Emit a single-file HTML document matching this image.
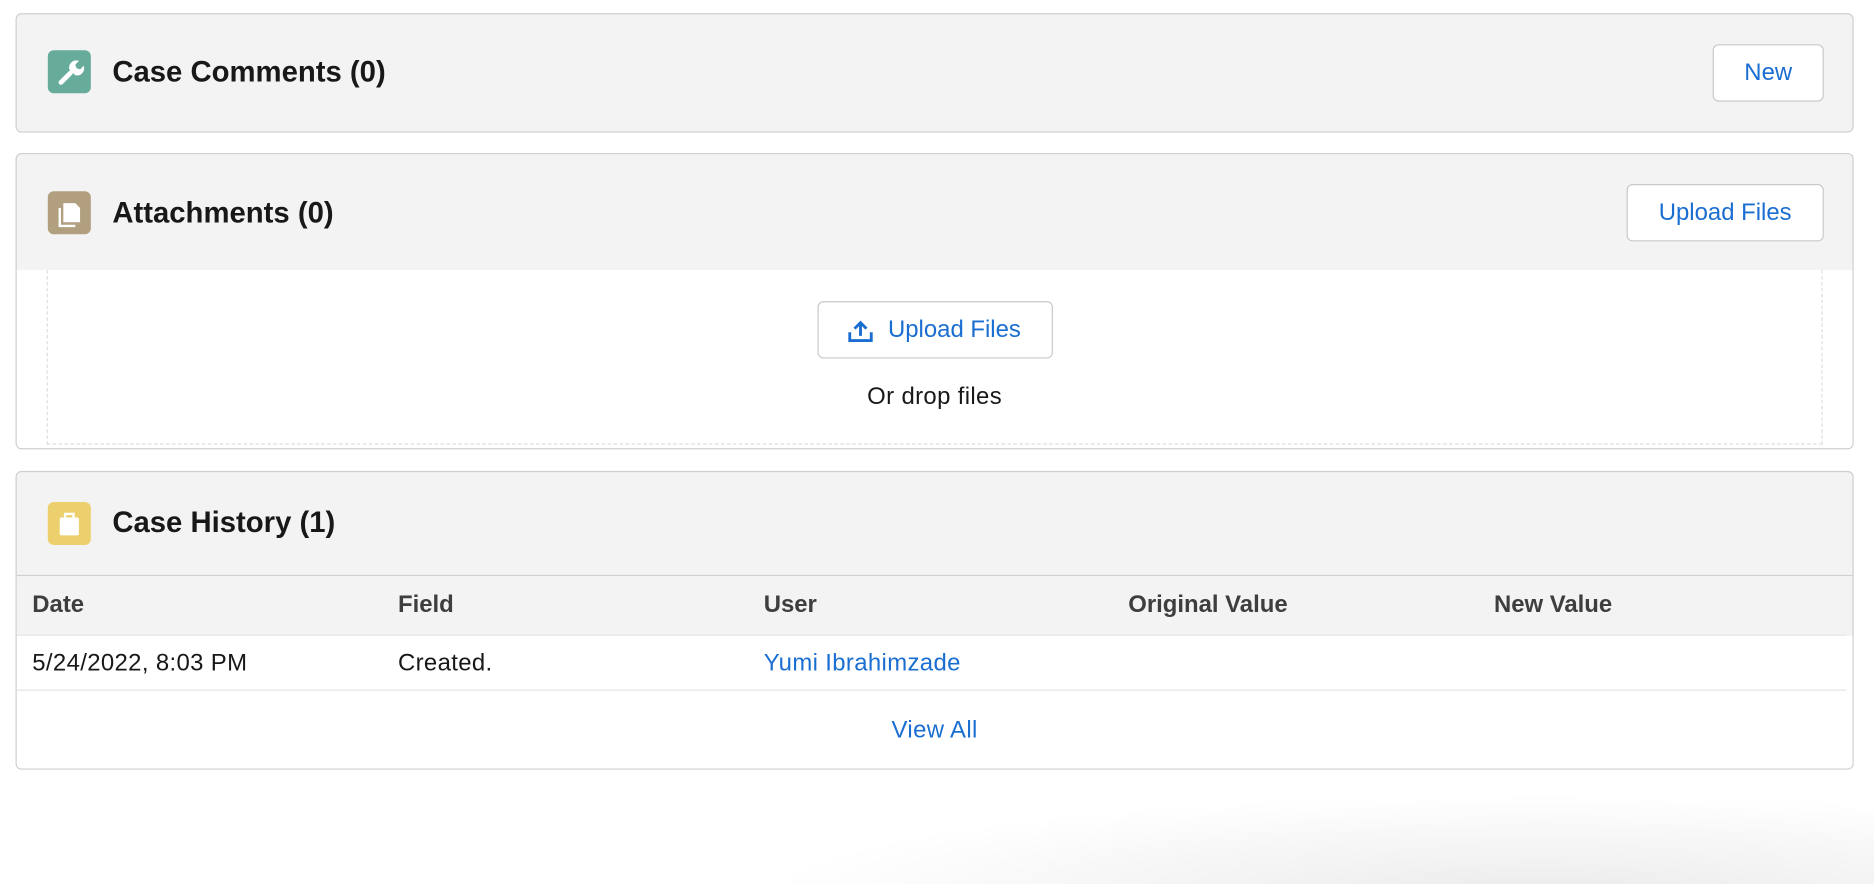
<!DOCTYPE html>
<html><head><meta charset="utf-8"><style>
html,body{margin:0;padding:0;width:1874px;height:826px;overflow:hidden;background:#fff;font-family:"Liberation Sans",Arial,sans-serif;}
#w{position:absolute;left:0;top:0;width:1568px;height:691px;transform:scale(1.19515);transform-origin:0 0;}
.card{position:absolute;left:13px;width:1536px;border:1px solid #cfcfcf;border-radius:5px;background:#f3f3f3;overflow:hidden;}
.ic{position:absolute;left:26px;width:36px;height:36px;border-radius:5px;}
.t{position:absolute;left:80px;font-size:24.5px;font-weight:bold;color:#181818;line-height:1;}
.btn{position:absolute;background:#fff;border:1px solid #c9c9c9;border-radius:5px;color:#1b6ed1;font-size:20px;text-align:center;box-sizing:border-box;}
.th{position:absolute;font-size:20px;font-weight:bold;color:#3e3e3e;}
.td{position:absolute;font-size:20px;color:#181818;letter-spacing:0.3px;}
</style></head><body><div id="w">
<div style="position:absolute;left:450px;top:640px;width:1200px;height:100px;background:radial-gradient(ellipse at 70% 110%,rgba(0,0,0,0.08),rgba(0,0,0,0) 55%);"></div>

<div class="card" style="top:11px;height:98px;">
 <div class="ic" style="top:30px;background:#67ab9b;">
  <svg width="36" height="36" viewBox="0 0 36 36"><path d="M11 27 L19 19" stroke="#fff" stroke-width="4" stroke-linecap="round"/><path d="M18 16 a6 6 0 0 1 8 -7 l-3 3 l1 3 l3 1 l3 -3 a6 6 0 0 1 -7 8 z" fill="#fff"/></svg>
 </div>
 <div class="t" style="top:37px;">Case Comments (0)</div>
 <div class="btn" style="left:1419px;top:25px;width:93px;height:48px;line-height:46px;">New</div>
</div>

<div class="card" style="top:128px;height:246px;">
 <div class="ic" style="top:31px;background:#b19f7f;">
  <svg width="36" height="36" viewBox="0 0 36 36"><path d="M13 10 h10 l4 4 v12 h-14z" fill="#fff"/><path d="M9 14 h2 v14 h12 v2 h-14z" fill="#fff"/></svg>
 </div>
 <div class="t" style="top:38px;">Attachments (0)</div>
 <div class="btn" style="left:1347px;top:25px;width:165px;height:48px;line-height:46px;">Upload Files</div>
 <div style="position:absolute;left:0;top:97px;width:1536px;height:149px;background:#fff;"></div>
 <div style="position:absolute;left:25px;top:97px;width:1486px;height:146px;border:1px dashed #dedede;border-top:none;background:#fff;box-sizing:border-box;"></div>
 <div class="btn" style="left:670px;top:123px;width:197px;height:48px;line-height:46px;">
  <svg style="position:absolute;left:24px;top:14px" width="22" height="20" viewBox="0 0 22 20"><path d="M2 11 v7 h18 v-7" fill="none" stroke="#1b6ed1" stroke-width="2.4"/><path d="M11 14 V3 M6 8 L11 3 L16 8" fill="none" stroke="#1b6ed1" stroke-width="2.4"/></svg>
  <span style="position:absolute;left:58px;top:0;">Upload Files</span>
 </div>
 <div class="td" style="left:0;width:1536px;text-align:center;top:192px;">Or drop files</div>
</div>

<div class="card" style="top:394px;height:248px;">
 <div class="ic" style="top:25px;background:#edd06e;">
  <svg width="36" height="36" viewBox="0 0 36 36"><rect x="10" y="13" width="16" height="15" rx="1.5" fill="#fff"/><path d="M14.5 13 v-3 h7 v3" fill="none" stroke="#fff" stroke-width="2"/></svg>
 </div>
 <div class="t" style="top:31px;">Case History (1)</div>
 <div style="position:absolute;left:0;top:86px;width:1536px;height:1px;background:#cfcfcf;"></div>
 <div style="position:absolute;left:0;top:87px;width:1531px;height:49px;background:#f3f3f3;border-bottom:1px solid #e3e3e3;"></div>
 <div class="th" style="left:13px;top:100px;">Date</div>
 <div class="th" style="left:319px;top:100px;">Field</div>
 <div class="th" style="left:625px;top:100px;">User</div>
 <div class="th" style="left:930px;top:100px;">Original Value</div>
 <div class="th" style="left:1236px;top:100px;">New Value</div>
 <div style="position:absolute;left:0;top:137px;width:1536px;height:111px;background:#fff;"></div>
 <div style="position:absolute;left:0;top:182px;width:1531px;height:1px;background:#e5e5e5;"></div>
 <div class="td" style="left:13px;top:149px;">5/24/2022, 8:03 PM</div>
 <div class="td" style="left:319px;top:149px;">Created.</div>
 <div class="td" style="left:625px;top:149px;color:#1b6ed1;">Yumi Ibrahimzade</div>
 <div class="td" style="left:0;width:1536px;text-align:center;top:205px;color:#1b6ed1;">View All</div>
</div>
</div></body></html>
